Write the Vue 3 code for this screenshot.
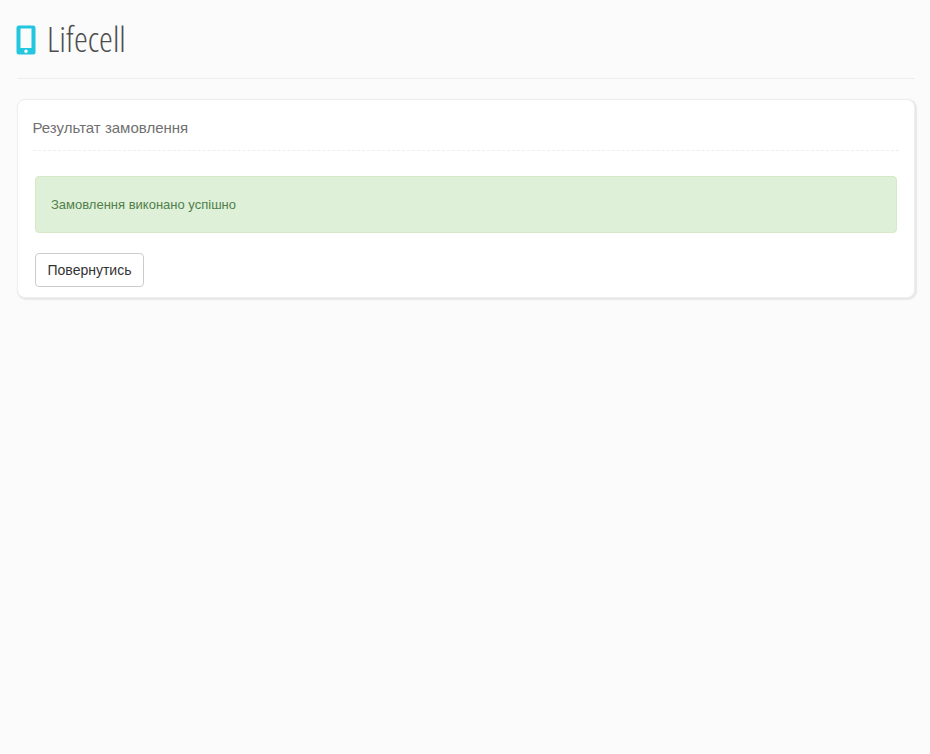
<template>
  <div class="page">
    <div class="page-header">
      <svg class="logo" width="20" height="30" viewBox="0 0 20 30">
        <path fill-rule="evenodd" fill="#22c6de" d="M3 0.5h14a2.5 2.5 0 0 1 2.5 2.5v24a2.5 2.5 0 0 1 -2.5 2.5h-14a2.5 2.5 0 0 1 -2.5 -2.5v-24a2.5 2.5 0 0 1 2.5 -2.5z M4.5 3.5v19.5h11v-19.5z M10 24.4a1.8 1.8 0 1 0 0 3.6a1.8 1.8 0 1 0 0 -3.6z"/>
      </svg>
      <h1 class="title">Lifecell</h1>
    </div>

    <div class="card">
      <div class="card-head">Результат замовлення</div>
      <div class="card-body">
        <div class="alert">Замовлення виконано успішно</div>
        <button class="btn">Повернутись</button>
      </div>
    </div>
  </div>
</template>

<script setup>
</script>

<style>
html, body {
  background: #fbfbfb;
}
</style>

<style scoped>
.page {
  min-height: 754px;
  box-sizing: border-box;
  padding: 0 15px 0 17px;
  background-color: #fbfbfb;
  font-family: "Liberation Sans", Arial, sans-serif;
}

.page-header {
  display: flex;
  align-items: center;
  gap: 11px;
  height: 78px;
  border-bottom: 1px solid #eeeeee;
}

.logo {
  flex: none;
  margin-top: 2px;
  margin-left: -1px;
}

.title {
  margin: 0;
  font-family: "Open Sans", sans-serif;
  font-weight: 300;
  font-stretch: 75%;
  font-size: 35px;
  line-height: 40px;
  color: #4d4d4d;
}

.card {
  margin-top: 20px;
  height: 199px;
  box-sizing: border-box;
  background: #fff;
  border: 1px solid #eeeeee;
  border-radius: 8px;
  box-shadow: 1px 1px 1px 1px #e8e8e8;
  padding: 0 15px 0 14.5px;
}

.card-head {
  height: 50px;
  line-height: 56px;
  font-size: 15px;
  color: #707070;
  border-bottom: 1px dashed #eeeeee;
}

.card-body {
  padding: 25px 2px 0 2.5px;
}

.alert {
  height: 57px;
  box-sizing: border-box;
  padding: 0 15px;
  line-height: 56px;
  font-size: 13px;
  color: #4f7f4a;
  background: #dff0d8;
  border: 1px solid #d6e9c6;
  border-radius: 4px;
}

.btn {
  display: block;
  margin-top: 20px;
  width: 109px;
  height: 34px;
  padding: 0;
  font-family: inherit;
  font-size: 14px;
  color: #333333;
  background: #fff;
  border: 1px solid #cccccc;
  border-radius: 4px;
  cursor: pointer;
}
</style>
